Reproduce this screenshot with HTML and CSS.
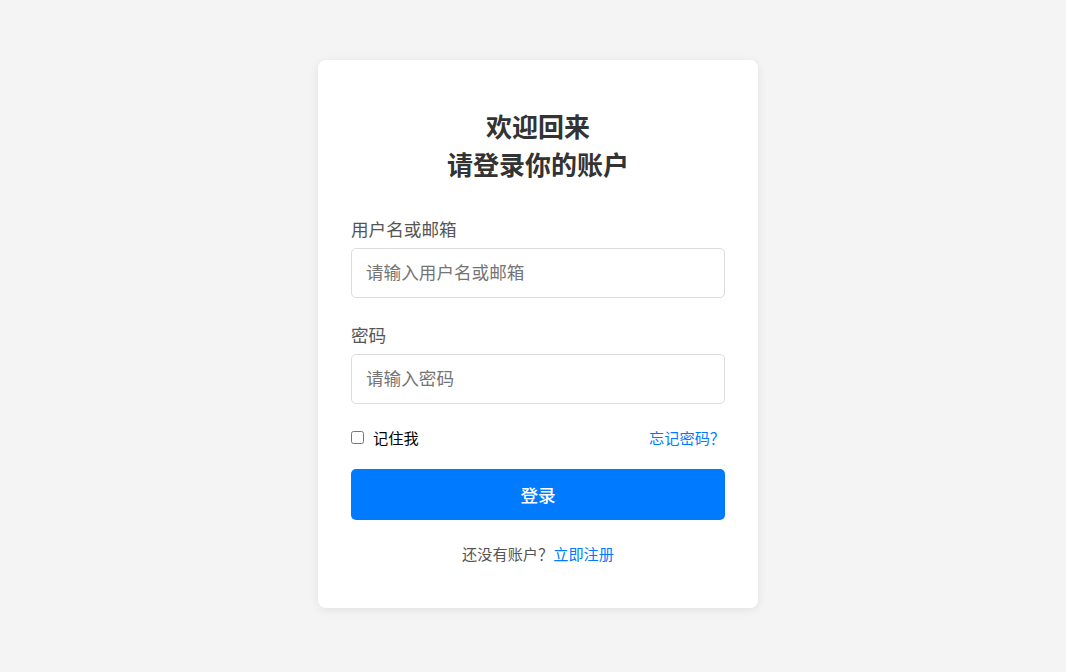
FILE: index.html
```html
<!DOCTYPE html>
<html lang="zh-CN">
<head>
<meta charset="utf-8">
<title>登录</title>
<link rel="stylesheet" href="styles.css">
</head>
<body>
<div class="card">
  <h1 class="title">欢迎回来<br>请登录你的账户</h1>
  <form class="form">
    <div class="group">
      <label class="label" for="user">用户名或邮箱</label>
      <input class="input" id="user" type="text" placeholder="请输入用户名或邮箱">
    </div>
    <div class="group">
      <label class="label" for="pwd">密码</label>
      <input class="input" id="pwd" type="password" placeholder="请输入密码">
    </div>
    <div class="options">
      <label class="remember"><input class="check" type="checkbox"><span>记住我</span></label>
      <a class="link" href="#">忘记密码？</a>
    </div>
    <button class="btn" type="button">登录</button>
  </form>
  <p class="footer">还没有账户？<a class="link" href="#">立即注册</a></p>
</div>
</body>
</html>
```
FILE: styles.css
```css
* { box-sizing: border-box; }
html, body { margin: 0; }
body {
  background: #f4f4f4;
  font-family: "Noto Sans CJK SC", "Noto Sans", sans-serif;
  display: flex;
  justify-content: center;
  padding: 60px 0 0 10px;
  min-height: 100vh;
}
.card {
  width: 440px;
  background: #fff;
  border-radius: 8px;
  box-shadow: 0 2px 10px rgba(0,0,0,0.08);
  padding: 47px 33px 44px;
  align-self: flex-start;
}
.title {
  margin: 0 0 34px;
  text-align: center;
  font-size: 26px;
  line-height: 38px;
  font-weight: 700;
  color: #333;
}
.form { margin: 0; }
.group + .group { margin-top: 25px; }
.label {
  display: block;
  font-size: 17.6px;
  line-height: 24px;
  color: #555;
  margin-bottom: 7px;
}
.input {
  display: block;
  width: 100%;
  height: 50px;
  border: 1px solid #ddd;
  border-radius: 5px;
  padding: 0 14px 3px;
  font-family: inherit;
  font-size: 17.6px;
  color: #333;
  background: #fff;
  outline: none;
}
.input::placeholder { color: #757575; }
.options {
  display: flex;
  justify-content: space-between;
  align-items: center;
  margin: 22px 0 21px;
  height: 22px;
  font-size: 15.2px;
}
.remember {
  display: flex;
  align-items: center;
  gap: 9px;
  color: #000;
}
.check {
  margin: 0;
  width: 13px;
  height: 13px;
}
.link {
  color: #007bff;
  text-decoration: none;
}
.btn {
  display: block;
  width: 100%;
  height: 51px;
  border: none;
  border-radius: 5px;
  background: #007bff;
  color: #fff;
  font-family: inherit;
  font-size: 17.6px;
  font-weight: 500;
  cursor: pointer;
}
.footer {
  margin: 22px 0 0;
  text-align: center;
  font-size: 15.2px;
  line-height: 22px;
  color: #555;
}
```
